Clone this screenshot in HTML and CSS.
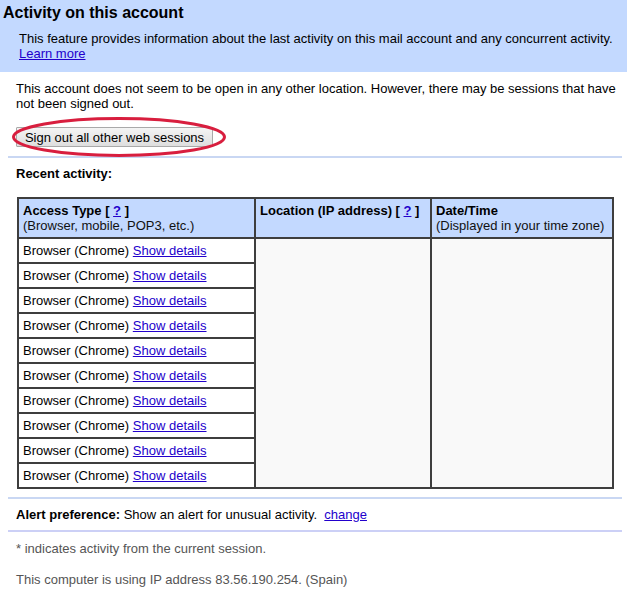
FILE: index.html
```html
<!DOCTYPE html>
<html>
<head>
<meta charset="utf-8">
<link rel="stylesheet" href="styles.css">
</head>
<body>
<div class="header">
  <h1 class="title">Activity on this account</h1>
  <p class="intro">This feature provides information about the last activity on this mail account and any concurrent activity.<br><a href="#">Learn more</a></p>
</div>
<div class="main">
  <p class="status">This account does not seem to be open in any other location. However, there may be sessions that have not been signed out.</p>
  <div class="btn-wrap">
    <button class="btn">Sign out all other web sessions</button>
    <svg class="circle" width="216" height="42" viewBox="0 0 216 42"><ellipse cx="108" cy="21" rx="105.5" ry="18.5" fill="none" stroke="#d81e3e" stroke-width="3"/></svg>
  </div>
</div>
<div class="sep first"></div>
<div class="main">
  <p class="label">Recent activity:</p>
  <table class="activity">
    <thead>
      <tr>
        <th class="c1"><b>Access Type [ <a href="#">?</a> ]</b><br><span class="sub">(Browser, mobile, POP3, etc.)</span></th>
        <th class="c2"><b>Location (IP address) [ <a href="#">?</a> ]</b></th>
        <th class="c3"><b>Date/Time</b><br><span class="sub">(Displayed in your time zone)</span></th>
      </tr>
    </thead>
    <tbody>
      <tr><td class="c1">Browser (Chrome) <a href="#">Show details</a></td><td class="blank" rowspan="10"></td><td class="blank" rowspan="10"></td></tr>
      <tr><td class="c1">Browser (Chrome) <a href="#">Show details</a></td></tr>
      <tr><td class="c1">Browser (Chrome) <a href="#">Show details</a></td></tr>
      <tr><td class="c1">Browser (Chrome) <a href="#">Show details</a></td></tr>
      <tr><td class="c1">Browser (Chrome) <a href="#">Show details</a></td></tr>
      <tr><td class="c1">Browser (Chrome) <a href="#">Show details</a></td></tr>
      <tr><td class="c1">Browser (Chrome) <a href="#">Show details</a></td></tr>
      <tr><td class="c1">Browser (Chrome) <a href="#">Show details</a></td></tr>
      <tr><td class="c1">Browser (Chrome) <a href="#">Show details</a></td></tr>
      <tr><td class="c1">Browser (Chrome) <a href="#">Show details</a></td></tr>
    </tbody>
  </table>
</div>
<div class="sep second"></div>
<div class="main">
  <p class="alert"><b>Alert preference:</b> Show an alert for unusual activity. &nbsp;<a href="#">change</a></p>
</div>
<div class="sep third"></div>
<div class="main">
  <p class="note">* indicates activity from the current session.</p>
  <p class="note ip">This computer is using IP address 83.56.190.254. (Spain)</p>
</div>
</body>
</html>
```

FILE: styles.css
```css
html, body {
  margin: 0;
  padding: 0;
  background: #ffffff;
}
body {
  font-family: "Liberation Sans", Arial, sans-serif;
  font-size: 13px;
  line-height: 15px;
  color: #000;
}
a {
  color: #2200cc;
  text-decoration: underline;
}
p { margin: 0; }

.header {
  background: #c3d9ff;
  height: 72px;
  padding: 0 0 0 3px;
  box-sizing: border-box;
}
.title {
  margin: 0;
  padding-top: 3px;
  font-size: 16px;
  line-height: 20px;
  font-weight: bold;
}
.intro {
  margin: 8px 0 0 16px;
}

.main {
  padding: 0 8px 0 16px;
}
.status {
  margin-top: 9px;
}
.btn-wrap {
  position: relative;
  margin-top: 16px;
  height: 20px;
}
.btn {
  font-family: "Liberation Sans", Arial, sans-serif;
  font-size: 13px;
  height: 20px;
  width: 197px;
  padding: 0;
  margin: 0;
  color: #000;
  border: 1px solid #a9a9a9;
  border-radius: 1px;
  background: linear-gradient(#f4f4f4, #dedede);
}
.circle {
  position: absolute;
  left: -5px;
  top: -11px;
}

.sep {
  height: 2px;
  background: #c9d7f3;
  margin: 0 5px 0 8px;
}
.sep.first { margin-top: 9px; }
.sep.second { margin-top: 8px; }
.sep.third { margin-top: 8px; background: #ccd0f6; }

.label {
  font-weight: bold;
  margin-top: 8px;
}
.activity {
  margin: 16px 0 0 1px;
  width: 597px;
  border-collapse: collapse;
  border: 2px solid #3e3e3e;
}
.activity th, .activity td {
  border: 2px solid #3e3e3e;
  text-align: left;
  vertical-align: top;
  padding: 0;
}
.activity th {
  background: #c3d9ff;
  font-weight: normal;
  height: 34px;
  padding: 4px 4px 0 4px;
}
.activity th .sub { color: #111; }
.activity .c1 { width: 227px; }
.activity .c2 { width: 166px; }
.activity td.c1 {
  height: 23px;
  padding: 0 4px;
  vertical-align: middle;
  background: #fff;
}
.activity td.blank {
  background: #f9f9f9;
}

.alert {
  margin-top: 8px;
}
.note {
  color: #555;
  margin-top: 9px;
}
.note.ip {
  margin-top: 16px;
}
```
